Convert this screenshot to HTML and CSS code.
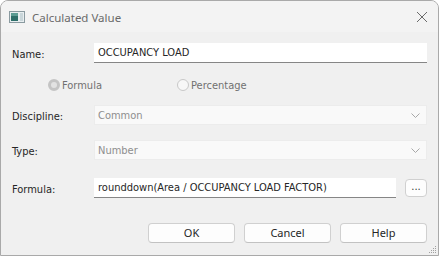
FILE: index.html
```html
<!DOCTYPE html>
<html>
<head>
<meta charset="utf-8">
<link rel="stylesheet" href="styles.css">
</head>
<body>
<div class="window">
  <div class="titlebar">
    <svg class="app-icon" width="16" height="12" viewBox="0 0 16 12">
      <rect x="0.5" y="0.5" width="15" height="11" fill="#e8eef0" stroke="#8a9aa0"/>
      <rect x="2" y="2" width="7" height="8" fill="#2f6f6a"/>
      <rect x="2" y="2" width="7" height="3" fill="#5c9c94"/>
      <rect x="11" y="2" width="3" height="8" fill="#c9d6da"/>
    </svg>
    <span class="title">Calculated Value</span>
    <svg class="close" width="12" height="12" viewBox="0 0 12 12">
      <path d="M1 1 L11 11 M11 1 L1 11" stroke="#6a6a6a" stroke-width="1" fill="none"/>
    </svg>
  </div>
  <div class="content">
    <div class="row row-name">
      <label class="label">Name:</label>
      <div class="input">OCCUPANCY LOAD</div>
    </div>
    <div class="radios">
      <div class="radio-opt">
        <span class="radio checked"></span><span class="radio-text">Formula</span>
      </div>
      <div class="radio-opt">
        <span class="radio"></span><span class="radio-text">Percentage</span>
      </div>
    </div>
    <div class="row row-disc">
      <label class="label">Discipline:</label>
      <div class="combo"><span>Common</span>
        <svg class="chev" width="9" height="5" viewBox="0 0 9 5"><path d="M0.5 0.5 L4.5 4.5 L8.5 0.5" stroke="#a8a8a8" fill="none"/></svg>
      </div>
    </div>
    <div class="row row-type">
      <label class="label">Type:</label>
      <div class="combo"><span>Number</span>
        <svg class="chev" width="9" height="5" viewBox="0 0 9 5"><path d="M0.5 0.5 L4.5 4.5 L8.5 0.5" stroke="#a8a8a8" fill="none"/></svg>
      </div>
    </div>
    <div class="row row-formula">
      <label class="label">Formula:</label>
      <div class="formula-wrap">
        <div class="input">rounddown(Area / OCCUPANCY LOAD FACTOR)</div>
        <div class="dots">...</div>
      </div>
    </div>
    <div class="buttons">
      <div class="btn">OK</div>
      <div class="btn">Cancel</div>
      <div class="btn">Help</div>
    </div>
  </div>
  <svg class="grip" width="8" height="8" viewBox="0 0 8 8">
    <rect x="6" y="0" width="1" height="1" fill="#a0a0a0"/>
    <rect x="4" y="2" width="1" height="1" fill="#a0a0a0"/>
    <rect x="6" y="2" width="1" height="1" fill="#a0a0a0"/>
    <rect x="2" y="4" width="1" height="1" fill="#a0a0a0"/>
    <rect x="4" y="4" width="1" height="1" fill="#a0a0a0"/>
    <rect x="6" y="4" width="1" height="1" fill="#a0a0a0"/>
    <rect x="0" y="6" width="1" height="1" fill="#a0a0a0"/>
    <rect x="2" y="6" width="1" height="1" fill="#a0a0a0"/>
    <rect x="4" y="6" width="1" height="1" fill="#a0a0a0"/>
    <rect x="6" y="6" width="1" height="1" fill="#a0a0a0"/>
  </svg>
</div>
</body>
</html>
```
FILE: styles.css
```css
html, body {
  margin: 0;
  padding: 0;
  background: #ffffff;
}
.window {
  position: relative;
  width: 439px;
  height: 256px;
  box-sizing: border-box;
  border: 1px solid #a9a9a9;
  border-radius: 8px 8px 0 0;
  background: #f0f0f0;
  overflow: hidden;
  font-family: "DejaVu Sans Condensed", "DejaVu Sans", sans-serif;
  font-stretch: condensed;
  font-size: 11px;
  color: #262626;
}
.titlebar {
  height: 31px;
  display: flex;
  align-items: center;
  padding-left: 8px;
  background: #f3f3f3;
}
.app-icon {
  margin-right: 7px;
  margin-top: 1px;
}
.title {
  font-family: "Noto Sans", "Open Sans", sans-serif;
  font-stretch: normal;
  font-size: 11.5px;
  color: #6a6a6a;
  flex: 1;
  margin-top: 1px;
}
.close {
  margin-right: 10px;
}
.content {
  padding: 0 11px 0 11px;
}
.row {
  display: grid;
  grid-template-columns: 82px 1fr;
  align-items: center;
  height: 20px;
}
.row-name { margin-top: 11px; }
.row-disc { margin-top: 10px; }
.row-type { margin-top: 15px; }
.row-formula { margin-top: 18px; }
.label {
  color: #262626;
  padding-top: 2px;
}
.input {
  height: 20px;
  box-sizing: border-box;
  background: #ffffff;
  border-bottom: 1px solid #868686;
  padding: 0 4px;
  line-height: 19px;
  color: #262626;
  white-space: nowrap;
  overflow: hidden;
}
.radios {
  display: flex;
  height: 20px;
  align-items: center;
  margin-top: 12px;
  padding-left: 36px;
}
.radio-opt {
  display: flex;
  align-items: center;
  width: 129px;
}
.radio {
  width: 12px;
  height: 12px;
  box-sizing: border-box;
  border: 1px solid #c8c8c8;
  border-radius: 50%;
  background: #f7f7f7;
  margin-right: 2px;
}
.radio.checked {
  border: 3px solid #c4c4c4;
  background: #e2e2e2;
}
.radio-text {
  color: #707070;
}
.combo {
  height: 20px;
  box-sizing: border-box;
  background: #f9f9f9;
  border: 1px solid #ececec;
  display: flex;
  align-items: center;
  justify-content: space-between;
  padding: 0 4px 0 3px;
  color: #8e8e8e;
}
.chev {
  margin-right: 2px;
}
.formula-wrap {
  display: flex;
  align-items: center;
  gap: 9px;
}
.formula-wrap .input {
  flex: 1;
}
.dots {
  width: 22px;
  height: 18px;
  box-sizing: border-box;
  border: 1px solid #d0d0d0;
  border-radius: 4px;
  background: #fdfdfd;
  text-align: center;
  line-height: 14px;
  font-size: 11px;
  color: #333333;
}
.buttons {
  display: flex;
  justify-content: flex-end;
  gap: 9px;
  margin-top: 25px;
}
.btn {
  width: 87px;
  height: 20px;
  box-sizing: border-box;
  border: 1px solid #d0d0d0;
  border-bottom-color: #c2c2c2;
  border-radius: 4px;
  background: #fdfdfd;
  text-align: center;
  line-height: 18px;
  font-family: "Noto Sans", "Open Sans", sans-serif;
  font-stretch: normal;
  font-size: 11px;
  color: #262626;
}
.grip {
  position: absolute;
  right: 1px;
  bottom: 1px;
}
```
